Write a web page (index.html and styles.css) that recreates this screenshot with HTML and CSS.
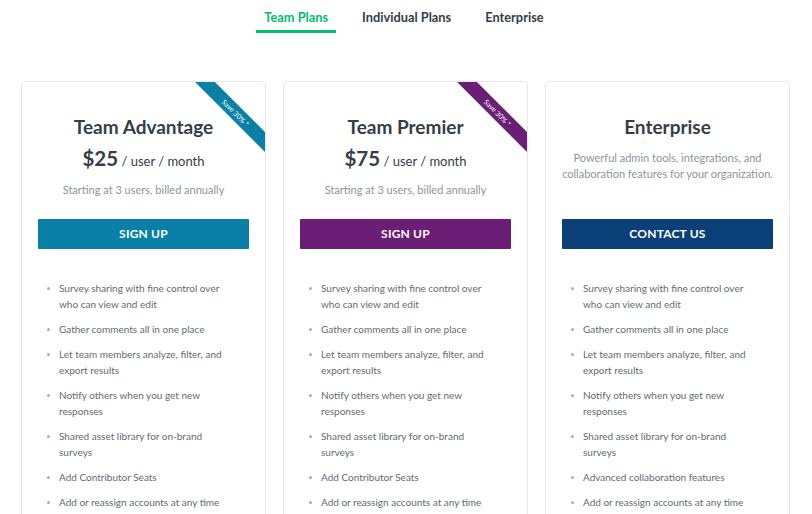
FILE: index.html
```html
<!DOCTYPE html>
<html>
<head>
<meta charset="utf-8">
<link rel="stylesheet" href="styles.css">
</head>
<body>
<nav class="tabs">
  <a class="tab active">Team Plans</a>
  <a class="tab">Individual Plans</a>
  <a class="tab">Enterprise</a>
</nav>
<main class="plans">
  <section class="card">
    <div class="ribbon blue"><span>Save 30% *</span></div>
    <h2 class="title">Team Advantage</h2>
    <p class="price"><strong>$25</strong> / user / month</p>
    <p class="note">Starting at 3 users, billed annually</p>
    <a class="btn blue">SIGN UP</a>
    <ul class="features">
      <li>Survey sharing with fine control over who can view and edit</li>
      <li>Gather comments all in one place</li>
      <li>Let team members analyze, filter, and export results</li>
      <li>Notify others when you get new responses</li>
      <li>Shared asset library for on-brand surveys</li>
      <li>Add Contributor Seats</li>
      <li>Add or reassign accounts at any time</li>
    </ul>
  </section>
  <section class="card">
    <div class="ribbon purple"><span>Save 30% *</span></div>
    <h2 class="title">Team Premier</h2>
    <p class="price"><strong>$75</strong> / user / month</p>
    <p class="note">Starting at 3 users, billed annually</p>
    <a class="btn purple">SIGN UP</a>
    <ul class="features">
      <li>Survey sharing with fine control over who can view and edit</li>
      <li>Gather comments all in one place</li>
      <li>Let team members analyze, filter, and export results</li>
      <li>Notify others when you get new responses</li>
      <li>Shared asset library for on-brand surveys</li>
      <li>Add Contributor Seats</li>
      <li>Add or reassign accounts at any time</li>
    </ul>
  </section>
  <section class="card">
    <h2 class="title">Enterprise</h2>
    <p class="desc">Powerful admin tools, integrations, and collaboration features for your organization.</p>
    <a class="btn navy">CONTACT US</a>
    <ul class="features">
      <li>Survey sharing with fine control over who can view and edit</li>
      <li>Gather comments all in one place</li>
      <li>Let team members analyze, filter, and export results</li>
      <li>Notify others when you get new responses</li>
      <li>Shared asset library for on-brand surveys</li>
      <li>Advanced collaboration features</li>
      <li>Add or reassign accounts at any time</li>
    </ul>
  </section>
</main>
</body>
</html>
```
FILE: styles.css
```css
* { box-sizing: border-box; }
html, body { margin: 0; padding: 0; background: #fff; }
body {
  font-family: Lato, "Noto Sans", sans-serif;
  color: #333e48;
  width: 812px;
  height: 514px;
  overflow: hidden;
}
.tabs {
  display: flex;
  justify-content: center;
  gap: 18px;
  padding-top: 9px;
  padding-right: 4px;
  height: 81px;
}
.tab {
  font-size: 12.8px;
  font-weight: 700;
  color: #333e48;
  padding: 0 8px;
  height: 24px;
  line-height: 16px;
}
.tab.active {
  color: #00bf6f;
  border-bottom: 3px solid #00bf6f;
}
.plans {
  display: grid;
  grid-template-columns: repeat(3, 245px);
  gap: 17px;
  padding-left: 21px;
  height: 433px;
  overflow: hidden;
}
.card {
  position: relative;
  overflow: hidden;
  border: 1px solid #e8e8e8;
  border-radius: 4px;
  padding: 32px 16px 0;
  height: 450px;
  text-align: center;
}
.ribbon {
  position: absolute;
  top: 23px;
  right: -20px;
  width: 100px;
  height: 14px;
  transform: rotate(45deg);
  color: #fff;
  font-size: 7px;
  line-height: 14px;
  text-align: center;
}
.ribbon span { position: relative; left: 1px; }
.ribbon.blue { background: #0a7fa8; }
.ribbon.purple { background: #6a1e75; }
.title {
  font-size: 19px;
  font-weight: 700;
  margin: 0;
  line-height: 26px;
  color: #333e48;
}
.price {
  margin: 6px 0 0;
  font-size: 13px;
  line-height: 24px;
  color: #333e48;
}
.price strong { font-size: 20.5px; font-weight: 700; }
.note {
  margin: 10px 0 0;
  font-size: 11px;
  line-height: 14px;
  color: #8b969c;
}
.desc {
  margin: 10px 0 0;
  font-size: 11px;
  line-height: 16px;
  color: #8b969c;
  height: 47px;
}
.btn {
  display: block;
  margin-top: 22px;
  height: 30px;
  line-height: 30px;
  color: #fff;
  font-size: 12px;
  font-weight: 700;
  letter-spacing: 0.2px;
  border-radius: 1px;
}
.btn.blue { background: #0a7fa8; }
.btn.purple { background: #6a1e75; }
.btn.navy { background: #0b3f78; }
.features {
  list-style: none;
  margin: 31px 0 0;
  padding: 0 0 0 5px;
  text-align: left;
}
.features li {
  position: relative;
  padding-left: 16px;
  font-size: 10px;
  line-height: 16px;
  color: #5f6b73;
  margin-bottom: 9px;
  padding-right: 20px;
}
.features li::before {
  content: "";
  position: absolute;
  left: 4px;
  top: 7px;
  width: 3px;
  height: 3px;
  border-radius: 50%;
  background: #a6aeb3;
}
```
